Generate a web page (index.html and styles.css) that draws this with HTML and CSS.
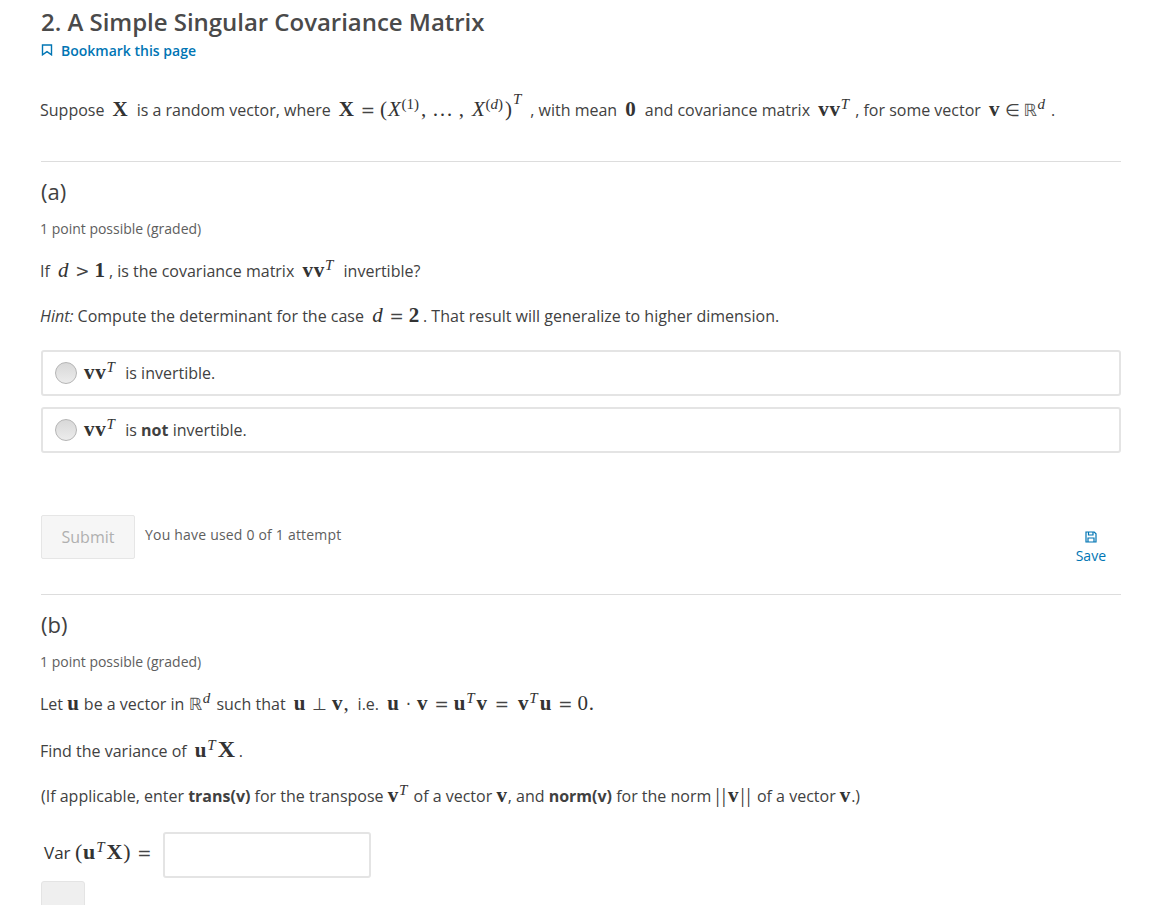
FILE: index.html
```html
<!DOCTYPE html>
<html lang="en">
<head>
<meta charset="utf-8">
<title>A Simple Singular Covariance Matrix</title>
<link rel="stylesheet" href="styles.css">
</head>
<body>
<main class="page">
  <h1 class="title">2. A Simple Singular Covariance Matrix</h1>
  <a class="bookmark" href="#">
    <svg class="bookmark-icon" viewBox="0 0 12 12" aria-hidden="true"><path d="M1.5 1h9v9.800L6 7.600l-4.500 3.200z"/></svg>
    <span>Bookmark this page</span>
  </a>
  <p class="intro">Suppose <span class="m gap"><b>X</b></span> is a random vector, where <span class="m gap"><b>X</b><span class="op">=</span>(<i>X</i><sup>(1)</sup>,&thinsp;…&thinsp;,&thinsp;<i class="after-dots">X</i><sup>(<i>d</i>)</sup>)<sup class="hi"><i>T</i></sup></span>, with mean <span class="m gap"><b>0</b></span> and covariance matrix <span class="m gap"><b>vv</b><sup><i>T</i></sup></span>, for some vector <span class="m gap"><b>v</b><span class="op narrow">∈</span><span class="bb">ℝ</span><sup><i>d</i></sup></span>.</p>

  <section class="problem">
    <h2 class="part">(a)</h2>
    <div class="points">1 point possible (graded)</div>
    <p class="line first">If <span class="m gap tight"><i>d</i><span class="op">&gt;</span><b>1</b></span>, is the covariance matrix <span class="m gap"><b>vv</b><sup><i>T</i></sup></span> invertible?</p>
    <p class="line hint"><em>Hint:</em> Compute the determinant for the case <span class="m gap tight"><i>d</i><span class="op">=</span><b>2</b></span>. That result will generalize to higher dimension.</p>
    <div class="choices">
      <label class="choice"><span class="radio"></span><span class="choice-text"><span class="m"><b>vv</b><sup><i>T</i></sup></span>&nbsp; is invertible.</span></label>
      <label class="choice"><span class="radio"></span><span class="choice-text"><span class="m"><b>vv</b><sup><i>T</i></sup></span>&nbsp; is <strong>not</strong> invertible.</span></label>
    </div>
    <div class="actions">
      <button class="submit" type="button">Submit</button>
      <span class="attempts">You have used 0 of 1 attempt</span>
      <a class="save" href="#">
        <svg class="save-icon" viewBox="0 0 12 12" aria-hidden="true"><path d="M1 1h8.200L11 2.800V11H1z"/><path d="M3.500 1v3h4.500V1M3 11V7h6v4"/></svg>
        <span>Save</span>
      </a>
    </div>
  </section>

  <section class="problem">
    <h2 class="part">(b)</h2>
    <div class="points">1 point possible (graded)</div>
    <p class="line first">Let <span class="m"><b>u</b></span> be a vector in <span class="m"><span class="bb">ℝ</span><sup><i>d</i></sup></span> such that <span class="m gap"><b>u</b><span class="op">⊥</span><b>v</b>,</span> i.e. <span class="m gap"><b>u</b><span class="op dot">·</span><b>v</b><span class="op">=</span><b>u</b><sup><i>T</i></sup><b>v</b><span class="op wide">=</span><b>v</b><sup><i>T</i></sup><b>u</b><span class="op">=</span>0.</span></p>
    <p class="line">Find the variance of <span class="m gap tight"><b>u</b><sup><i>T</i></sup><b class="big">X</b></span>.</p>
    <p class="line flush">(If applicable, enter <strong>trans(v)</strong> for the transpose <span class="m"><b>v</b><sup><i>T</i></sup></span> of a vector <span class="m"><b>v</b></span>, and <strong>norm(v)</strong> for the norm <span class="m norm">||<b>v</b>||</span> of a vector <span class="m"><b>v</b></span>.)</p>
    <div class="answer">
      <span class="answer-label">Var <span class="m var-math">(<b>u</b><sup><i>T</i></sup><b>X</b>)<span class="op">=</span></span></span>
      <input class="answer-input" type="text" aria-label="Answer">
    </div>
    <button class="check" type="button" aria-label="Submit"></button>
  </section>
</main>
</body>
</html>
```
FILE: styles.css
```css
html, body { margin: 0; padding: 0; height: 905px; overflow: hidden; background: #fff; }
body { font-family: "Open Sans", sans-serif; font-size: 16px; color: #414141; }
.page { box-sizing: border-box; padding: 0 37px 0 41px; }
.title { margin: 0; padding-top: 5px; font-size: 24px; line-height: 33px; font-weight: 600; color: #4a4a4a; letter-spacing: -0.03px; }
.bookmark { display: flex; align-items: center; gap: 8px; height: 24px; font-size: 14px; font-weight: 600; color: #0075b4; text-decoration: none; }
.bookmark-icon { width: 12px; height: 12px; fill: none; stroke: #0075b4; stroke-width: 1.400; }
.intro { margin: 30px 0 0; height: 34px; line-height: 34px; padding-bottom: 35px; border-bottom: 1px solid #ddd; white-space: nowrap; text-indent: -1px; }
.m { font-family: "Liberation Serif", serif; font-size: 21px; letter-spacing: 0.8px; color: #333; }
.m b { font-weight: 700; color: #333; }
.m sup { font-size: 15px; line-height: 0; vertical-align: 7px; letter-spacing: 0; margin-right: 2px; }
.m sup.hi { vertical-align: 12px; margin-right: 5px; }
.after-dots { margin-left: 2px; }
.op { margin: 0 5px 0 6px; font-family: "DejaVu Sans", sans-serif; font-size: 17px; line-height: 0; color: #444; letter-spacing: 0; }
.op.narrow { margin: 0 3px 0 5px; }
.op.wide { margin: 0 9px 0 7px; }
.dot { margin: 0 6px; }
.gap { margin: 0 4px; }
.gap.tight { margin-right: 3px; }
.norm { letter-spacing: 2px; }
.bb { font-family: "DejaVu Sans", sans-serif; font-size: 17px; color: #555; }
.big { font-size: 24px; }
.var-math { font-size: 22px; }
.part { margin: 0; padding-top: 14px; font-size: 22px; line-height: 30px; font-weight: 400; color: #414141; }
.points { margin-top: 13px; font-size: 14px; line-height: 20px; color: #5e5e5e; text-indent: -1px; }
.line { margin: 0; height: 46px; line-height: 46px; white-space: nowrap; text-indent: -1px; }
.line.first { margin-top: 8px; }
.line.hint { line-height: 44px; }
.line.flush { text-indent: 0; }
.choices { display: flex; flex-direction: column; gap: 11px; margin-top: 11px; }
.choice { box-sizing: border-box; display: flex; align-items: center; gap: 7px; height: 46px; padding: 0 12px; border: 2px solid #e4e4e4; border-radius: 3px; }
.choice-text { margin-bottom: 2px; }
.radio { width: 20px; height: 20px; border: 1px solid #b5b5b5; border-radius: 50%; background: linear-gradient(#d8d8d8, #ececec); flex: none; }
.actions { display: flex; align-items: flex-start; margin-top: 62px; height: 79px; }
.submit { box-sizing: border-box; width: 94px; height: 44px; padding: 0; background: #f6f6f6; border: 1px solid #e6e6e6; border-radius: 2px; font: 16px "Open Sans", sans-serif; color: #b0b0b0; }
.attempts { margin: 10px 0 0 10px; font-size: 14px; line-height: 20px; color: #5e5e5e; letter-spacing: 0.2px; }
.save { display: flex; flex-direction: column; align-items: center; gap: 4px; margin: 16px 15px 0 auto; font-size: 14px; line-height: 18px; color: #0075b4; text-decoration: none; }
.save-icon { width: 12px; height: 12px; fill: none; stroke: #0075b4; stroke-width: 1.200; }
.problem + .problem { border-top: 1px solid #ddd; }
.answer { display: flex; align-items: center; gap: 6px; margin-top: 14px; padding-left: 3px; }
.answer-label { color: #333; font-size: 17px; white-space: nowrap; margin-bottom: 7px; }
.answer-input { box-sizing: border-box; width: 208px; height: 46px; border: 2px solid #e4e4e4; border-radius: 3px; background: #fff; }
.check { display: block; box-sizing: border-box; width: 44px; height: 44px; margin-top: 3px; padding: 0; background: #efefef; border: 1px solid #e4e4e4; border-radius: 3px; }
```
